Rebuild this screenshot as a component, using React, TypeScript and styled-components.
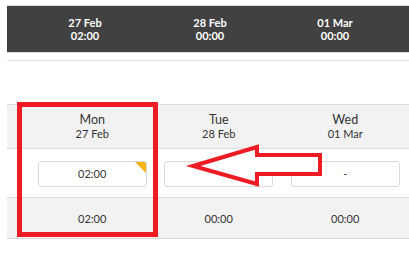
import React from "react";
import styled, { createGlobalStyle } from "styled-components";

const GlobalStyle = createGlobalStyle`
  html, body {
    margin: 0;
    padding: 0;
    background: #ffffff;
    font-family: Lato, "Open Sans", sans-serif;
    overflow: hidden;
  }
`;

const Page = styled.div`
  position: relative;
  width: 409px;
  height: 253px;
  padding: 5px 0 0 7px;
  box-sizing: border-box;
`;

const DarkBar = styled.div`
  display: flex;
  height: 48px;
  background: #414141;
  border-top: 1px solid #dddddd;
  border-bottom: 1px solid #dddddd;
  box-sizing: border-box;
  margin-right: -10px;
`;

const Spacer = styled.div<{ $w: number }>`
  flex: 0 0 ${(p) => p.$w}px;
`;

const DarkCell = styled.div`
  flex: 0 0 125px;
  display: flex;
  flex-direction: column;
  align-items: center;
  justify-content: center;
  color: #ffffff;
  font-weight: 700;
  font-size: 11px;
  line-height: 13px;
  padding-bottom: 1px;
`;

const Divider = styled.div`
  height: 1px;
  background: #e0e0e0;
  margin-top: 7px;
  margin-right: -10px;
`;

const Table = styled.div`
  margin-top: 43px;
  margin-right: -10px;
`;

const Row = styled.div<{ $h: number; $bg: string }>`
  display: flex;
  height: ${(p) => p.$h}px;
  background: ${(p) => p.$bg};
  border-top: 1px solid #dddddd;
  box-sizing: border-box;
  &:last-child {
    border-bottom: 1px solid #dddddd;
  }
`;

const Cell = styled.div`
  flex: 0 0 126.5px;
  display: flex;
  flex-direction: column;
  align-items: center;
  justify-content: center;
  color: #333333;
`;

const DayName = styled.div`
  font-size: 12.5px;
  line-height: 14px;
`;

const DayDate = styled.div`
  font-size: 11px;
  line-height: 13px;
`;

const Input = styled.div<{ $flag?: boolean }>`
  position: relative;
  width: 109px;
  height: 26px;
  border: 1px solid #d9d9d9;
  border-radius: 3px;
  box-sizing: border-box;
  background: #ffffff;
  display: flex;
  align-items: center;
  justify-content: center;
  font-size: 11px;
  color: #333333;
  overflow: hidden;
  margin-top: 1px;
  &::after {
    content: "";
    display: ${(p) => (p.$flag ? "block" : "none")};
    position: absolute;
    top: 0;
    right: 0;
    width: 0;
    height: 0;
    border-top: 11px solid #f5b417;
    border-left: 11px solid transparent;
  }
`;

const Time = styled.div`
  font-size: 11px;
  color: #333333;
`;

const Overlay = styled.svg`
  position: absolute;
  left: 0;
  top: 0;
  pointer-events: none;
`;

const days = [
  { name: "Mon", date: "27 Feb", value: "02:00", flag: true, total: "02:00" },
  { name: "Tue", date: "28 Feb", value: "", flag: false, total: "00:00" },
  { name: "Wed", date: "01 Mar", value: "-", flag: false, total: "00:00" },
];

const top = [
  { date: "27 Feb", time: "02:00" },
  { date: "28 Feb", time: "00:00" },
  { date: "01 Mar", time: "00:00" },
];

export default function App() {
  return (
    <>
      <GlobalStyle />
      <Page>
        <DarkBar>
          <Spacer $w={15.5} />
          {top.map((t) => (
            <DarkCell key={t.date}>
              <div>{t.date}</div>
              <div>{t.time}</div>
            </DarkCell>
          ))}
        </DarkBar>
        <Divider />
        <Table>
          <Row $h={44} $bg="#f2f2f2">
            <Spacer $w={22} />
            {days.map((d) => (
              <Cell key={d.name}>
                <DayName>{d.name}</DayName>
                <DayDate>{d.date}</DayDate>
              </Cell>
            ))}
          </Row>
          <Row $h={49} $bg="#ffffff">
            <Spacer $w={22} />
            {days.map((d) => (
              <Cell key={d.name}>
                <Input $flag={d.flag}>{d.value}</Input>
              </Cell>
            ))}
          </Row>
          <Row $h={42} $bg="#f2f2f2">
            <Spacer $w={22} />
            {days.map((d) => (
              <Cell key={d.name}>
                <Time>{d.total}</Time>
              </Cell>
            ))}
          </Row>
        </Table>
        <Overlay width="409" height="253" viewBox="0 0 409 253">
          <rect x="19.5" y="104.5" width="136" height="130" fill="none" stroke="#ed1c24" strokeWidth="5" />
          <polygon
            points="193,166 257,147 257,155 320,155 320,174 257,174 257,184"
            fill="#ffffff"
            stroke="#ed1c24"
            strokeWidth="4"
            strokeLinejoin="miter"
          />
        </Overlay>
      </Page>
    </>
  );
}
